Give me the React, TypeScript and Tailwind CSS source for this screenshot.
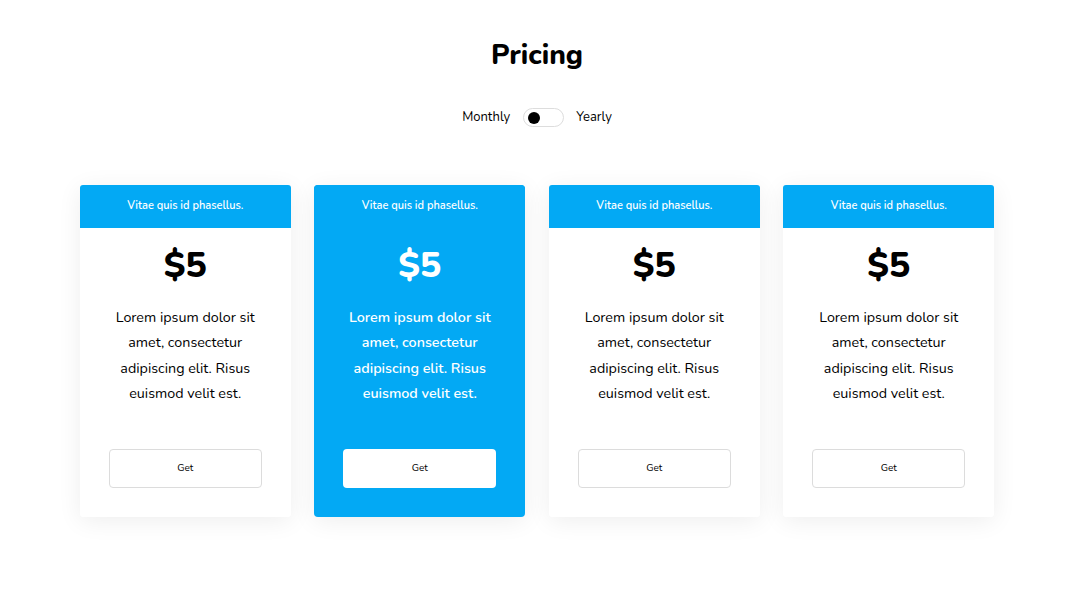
import React from "react";

const font = { fontFamily: '"Nunito", "Lato", "Open Sans", sans-serif' };

type Plan = { highlighted?: boolean };

const plans: Plan[] = [{}, { highlighted: true }, {}, {}];

function Card({ highlighted }: Plan) {
  return (
    <div
      className={
        "w-[211px] h-[332px] flex flex-col items-center overflow-hidden shadow-[0_4px_24px_rgba(0,0,0,0.07)] " +
        (highlighted ? "bg-[#03a9f4] rounded-[4px] text-white" : "bg-white rounded-[3px] text-black")
      }
    >
      <div className="w-full h-[43px] bg-[#03a9f4] flex items-center justify-center text-white text-[11px] font-semibold">
        Vitae quis id phasellus.
      </div>
      <div className="mt-[20px] text-[36px] leading-[36px] font-extrabold">$5</div>
      <p className={"mt-[21px] text-[14.3px] leading-[25.5px] text-center " + (highlighted ? "font-semibold" : "")}>
        Lorem ipsum dolor sit
        <br />
        amet, consectetur
        <br />
        adipiscing elit. Risus
        <br />
        euismod velit est.
      </p>
      <button
        className={
          "mt-auto mb-[29px] w-[153px] h-[39px] rounded-[4px] bg-white text-[10px] text-black " +
          (highlighted ? "" : "border border-[#dcdcdc]")
        }
      >
        Get
      </button>
    </div>
  );
}

export default function App() {
  return (
    <div className="w-full min-h-[590px] bg-white pr-[10px]" style={font}>
      <div className="pt-[36px] flex flex-col items-center">
        <h1 className="text-[28px] leading-[38px] font-extrabold text-black">Pricing</h1>
        <div className="mt-[34px] flex items-center text-[13px] text-black">
          <span>Monthly</span>
          <div className="ml-[13px] w-[41px] h-[19px] rounded-full border border-[#dddddd] bg-white flex items-center pl-[4px]">
            <div className="w-[12px] h-[12px] rounded-full bg-black" />
          </div>
          <span className="ml-[12px]">Yearly</span>
        </div>
        <div className="mt-[57px] flex gap-[23.5px]">
          {plans.map((p, i) => (
            <Card key={i} highlighted={p.highlighted} />
          ))}
        </div>
      </div>
    </div>
  );
}
